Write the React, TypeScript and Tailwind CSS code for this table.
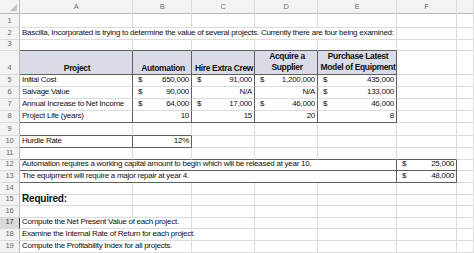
import React from "react";

type C = {
  c: number;
  span?: number;
  t?: React.ReactNode;
  cls?: string;
};

const COLS = [20, 113, 59, 63, 63, 79, 60];
const ROWH = [14, 14, 12, 11, 24, 12, 12, 12, 12, 13, 12, 12, 11, 12, 12, 11, 12, 11, 12, 12, 20];

function Acct({ v }: { v: string }) {
  return (
    <div className="flex w-full justify-between pl-[3px] pr-[2px]">
      <span>$</span>
      <span>{v}</span>
    </div>
  );
}
function R({ v }: { v: string }) {
  return <div className="w-full pr-[2px] text-right">{v}</div>;
}

const HEAD = "justify-center font-bold text-center bg-[#d9dce6] text-[8.5px] tracking-[-0.35px]";

const rows: Record<number, C[]> = {
  2: [
    {
      c: 1,
      span: 5,
      t: "Bascilla, Incorporated is trying to determine the value of several projects. Currently there are four being examined:",
    },
  ],
  4: [
    { c: 1, t: "Project", cls: HEAD },
    { c: 2, t: "Automation", cls: HEAD },
    { c: 3, t: "Hire Extra Crew", cls: HEAD },
    {
      c: 4,
      t: (
        <span className="leading-[11px]">
          Acquire a<br />Supplier
        </span>
      ),
      cls: HEAD,
    },
    {
      c: 5,
      t: (
        <span className="leading-[11px]">
          Purchase Latest
          <br />
          Model of Equipment
        </span>
      ),
      cls: HEAD,
    },
  ],
  5: [
    { c: 1, t: "Initial Cost" },
    { c: 2, t: <Acct v="650,000" /> },
    { c: 3, t: <Acct v="91,000" /> },
    { c: 4, t: <Acct v="1,200,000" /> },
    { c: 5, t: <Acct v="435,000" /> },
  ],
  6: [
    { c: 1, t: "Salvage Value" },
    { c: 2, t: <Acct v="90,000" /> },
    { c: 3, t: <R v="N/A" /> },
    { c: 4, t: <R v="N/A" /> },
    { c: 5, t: <Acct v="133,000" /> },
  ],
  7: [
    { c: 1, t: "Annual Increase to Net Income" },
    { c: 2, t: <Acct v="64,000" /> },
    { c: 3, t: <Acct v="17,000" /> },
    { c: 4, t: <Acct v="46,000" /> },
    { c: 5, t: <Acct v="46,000" /> },
  ],
  8: [
    { c: 1, t: "Project Life (years)" },
    { c: 2, t: <R v="10" /> },
    { c: 3, t: <R v="15" /> },
    { c: 4, t: <R v="20" /> },
    { c: 5, t: <R v="8" /> },
  ],
  10: [
    { c: 1, t: "Hurdle Rate" },
    { c: 2, t: <R v="12%" /> },
  ],
  12: [
    {
      c: 1,
      span: 5,
      t: "Automation requires a working capital amount to begin which will be released at year 10.",
    },
    { c: 6, t: <Acct v="25,000" /> },
  ],
  13: [
    { c: 1, span: 5, t: "The equipment will require a major repair at year 4." },
    { c: 6, t: <Acct v="48,000" /> },
  ],
  15: [{ c: 1, t: "Required:", cls: "font-bold text-[10px] tracking-[-0.2px]" }],
  17: [{ c: 1, span: 2, t: "Compute the Net Present Value of each project." }],
  18: [{ c: 1, span: 2, t: "Examine the Internal Rate of Return for each project." }],
  19: [{ c: 1, span: 2, t: "Compute the Profitability Index for all projects." }],
};

function darkBottom(r: number, c: number, span: number) {
  const end = c + span - 1;
  if ((r === 3 || r === 4 || r === 8) && c >= 1 && end <= 5) return true;
  if ((r === 9 || r === 10) && c >= 1 && end <= 2) return true;
  if ((r === 11 || r === 12 || r === 13) && c >= 1 && end <= 6) return true;
  return false;
}
function darkRight(r: number, c: number, span: number) {
  const end = c + span - 1;
  if (r >= 4 && r <= 8 && end >= 1 && end <= 5) return true;
  if (r === 10 && end >= 1 && end <= 2) return true;
  if ((r === 12 || r === 13) && (end === 5 || end === 6)) return true;
  return false;
}

const LETTERS = ["A", "B", "C", "D", "E", "F", ""];

export default function App() {
  const colTemplate = COLS.map((w) => `${w}px`).join(" ") + " 1fr";
  const rowTemplate = ROWH.map((h) => `${h}px`).join(" ");
  const cells: React.ReactNode[] = [];

  cells.push(
    <div key="corner" className="relative border-b border-r border-[#b8b8b8] bg-[#f3f3f3]">
      <svg className="absolute bottom-[2px] right-[2px]" width="7" height="7" viewBox="0 0 7 7">
        <polygon points="7,0 7,7 0,7" fill="#c4c4c4" />
      </svg>
    </div>
  );
  for (let i = 0; i < 7; i++) {
    cells.push(
      <div
        key={`h${i}`}
        className="flex items-end justify-center border-b border-r border-b-[#b8b8b8] border-r-[#dadada] bg-[#f3f3f3] pb-[1px] text-[7.5px] text-[#707070]"
      >
        {LETTERS[i]}
      </div>
    );
  }

  for (let r = 1; r <= 20; r++) {
    const sel = r === 17;
    cells.push(
      <div
        key={`rh${r}`}
        className={
          "flex items-end justify-center border-b border-r border-b-[#dadada] pb-[1px] text-[7.5px] " +
          (sel
            ? "bg-[#dadada] text-[#444] border-r-[#3f3f3f]"
            : "bg-[#f3f3f3] text-[#6a6a6a] border-r-[#b8b8b8]")
        }
      >
        {r <= 19 ? r : ""}
      </div>
    );
    const list = rows[r] || [];
    let c = 1;
    while (c <= 7) {
      const found = list.find((x) => x.c === c);
      const span = found?.span ?? 1;
      const db = darkBottom(r, c, span);
      const dr = darkRight(r, c, span);
      cells.push(
        <div
          key={`c${r}-${c}`}
          style={{ gridColumn: `span ${span} / span ${span}` }}
          className={
            "flex items-end overflow-visible whitespace-nowrap border-b border-r pb-[1px] pl-[2px] " +
            (db ? "border-b-[#5f5f5f] " : "border-b-[#dcdcdc] ") +
            (dr ? "border-r-[#5f5f5f] " : "border-r-[#dcdcdc] ") +
            (found?.cls ?? "")
          }
        >
          {found?.t}
        </div>
      );
      c += span;
    }
  }

  return (
    <div
      className="h-[253px] w-[474px] overflow-hidden bg-white text-[8px] leading-[10px] tracking-[-0.27px] text-[#111]"
      style={{ fontFamily: '"Liberation Sans", Arial, sans-serif' }}
    >
      <div className="grid" style={{ gridTemplateColumns: colTemplate, gridTemplateRows: rowTemplate }}>
        {cells}
      </div>
    </div>
  );
}
